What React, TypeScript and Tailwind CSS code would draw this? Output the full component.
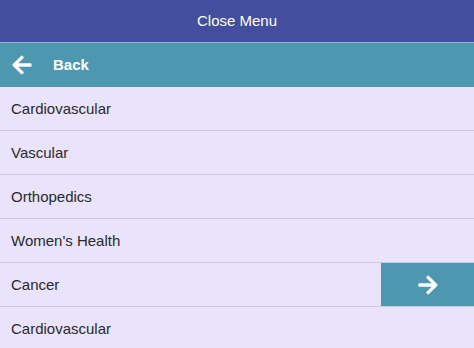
import { FaArrowLeft, FaArrowRight } from "react-icons/fa";

const items = [
  "Cardiovascular",
  "Vascular",
  "Orthopedics",
  "Women's Health",
  "Cancer",
  "Cardiovascular",
];

export default function App() {
  return (
    <div className="w-[474px] h-[348px] overflow-hidden bg-[#e9e4fc] font-['Liberation_Sans',Arial,sans-serif]">
      <div className="h-[42px] bg-[#434e9f] flex items-center justify-center text-white text-[15px]">
        Close Menu
      </div>
      <div className="h-px bg-[#8fb8e0]" />
      <div className="h-[44px] bg-[#4d97b0] flex items-center text-white text-[15px] font-bold">
        <FaArrowLeft className="ml-[11px] w-[22px] h-[22px]" />
        <span className="ml-[20px]">Back</span>
      </div>
      {items.map((item, i) => (
        <div
          key={i}
          className="h-[44px] flex items-center border-b border-[#cdc6e0] text-[#2a2a2a] text-[15px]"
        >
          <span className="pl-[11px] pt-px flex-1">{item}</span>
          {item === "Cancer" && (
            <div className="w-[93px] h-full bg-[#4d97b0] flex items-center justify-center text-white">
              <FaArrowRight className="w-[22px] h-[22px]" />
            </div>
          )}
        </div>
      ))}
    </div>
  );
}
